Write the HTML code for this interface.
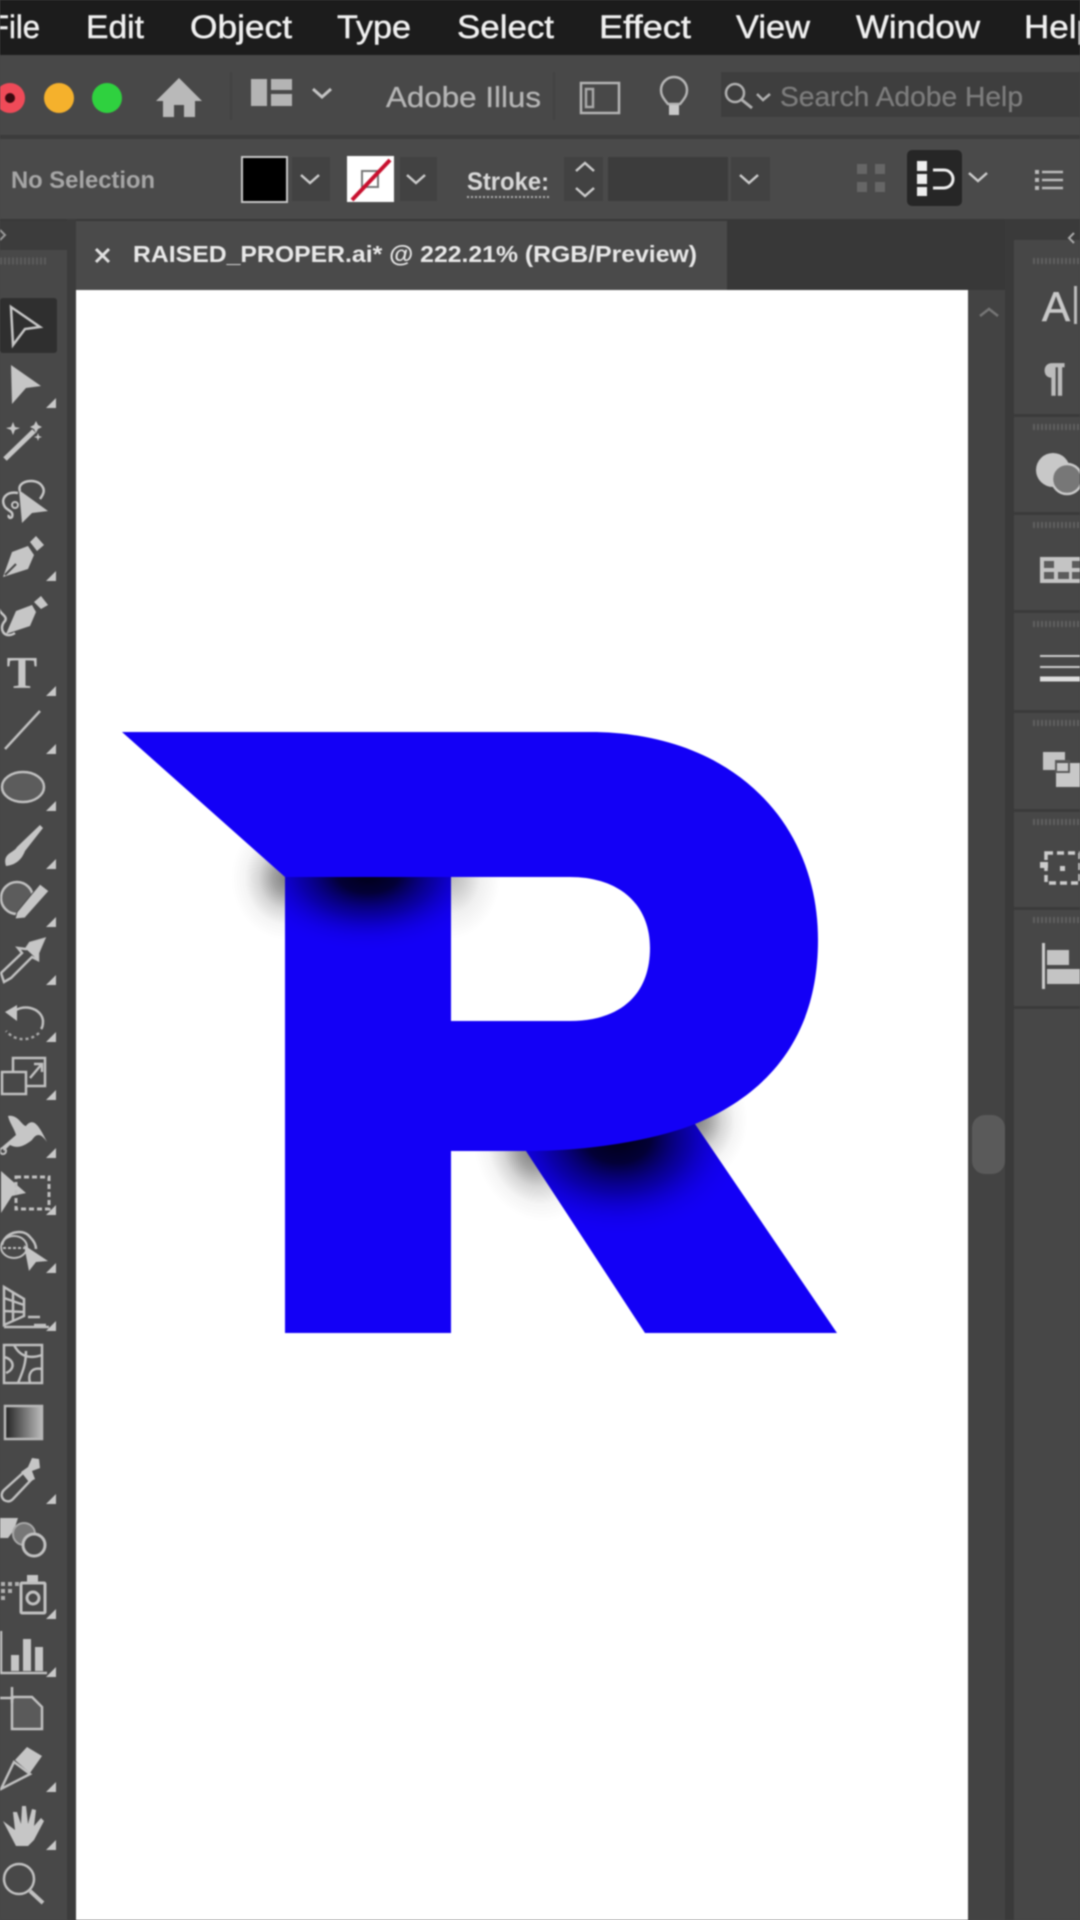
<!DOCTYPE html>
<html><head><meta charset="utf-8"><style>
html,body{margin:0;padding:0;background:#474747;width:1080px;height:1920px;overflow:hidden}
svg{display:block;filter:blur(.85px)}
text{font-family:"Liberation Sans",sans-serif}
</style></head><body>
<svg width="1080" height="1920" viewBox="0 0 1080 1920" xmlns="http://www.w3.org/2000/svg">
<defs>
<radialGradient id="sd"><stop offset="0" stop-color="#000" stop-opacity=".5"/><stop offset=".25" stop-color="#000" stop-opacity=".36"/><stop offset=".5" stop-color="#000" stop-opacity=".16"/><stop offset=".75" stop-color="#000" stop-opacity=".04"/><stop offset="1" stop-color="#000" stop-opacity="0"/></radialGradient>
<radialGradient id="sl"><stop offset="0" stop-color="#000" stop-opacity=".28"/><stop offset=".3" stop-color="#000" stop-opacity=".18"/><stop offset=".6" stop-color="#000" stop-opacity=".06"/><stop offset="1" stop-color="#000" stop-opacity="0"/></radialGradient>
<radialGradient id="in"><stop offset="0" stop-color="#000014"/><stop offset=".25" stop-color="#020030" stop-opacity=".97"/><stop offset=".55" stop-color="#06007a" stop-opacity=".62"/><stop offset=".8" stop-color="#0d00c0" stop-opacity=".22"/><stop offset="1" stop-color="#1300f6" stop-opacity="0"/></radialGradient>
<linearGradient id="gr"><stop offset="0" stop-color="#222"/><stop offset="1" stop-color="#bbb"/></linearGradient>
<clipPath id="stem"><rect x="285" y="877" width="166" height="200"/></clipPath>
<clipPath id="leg"><path d="M526 1151C590 1151 655 1140 695 1124L837 1333H645Z"/></clipPath>
<path id="tri" d="M0 8L10 -2V8Z" fill="#c8c8c8"/>
</defs>

<!-- base -->
<rect width="1080" height="1920" fill="#474747"/>
<rect width="1080" height="55" fill="#1c1c1c"/>
<rect y="55" width="1080" height="80" fill="#484848"/>
<rect y="135" width="1080" height="4" fill="#3b3b3b"/>
<rect y="139" width="1080" height="80" fill="#4a4a4a"/>
<rect y="219" width="1080" height="71" fill="#383838"/>

<!-- menu -->
<g font-size="32" fill="#f0f0f0" stroke="#f0f0f0" stroke-width=".45">
<text x="-10" y="38" textLength="50" lengthAdjust="spacingAndGlyphs">File</text>
<text x="86" y="38" textLength="58" lengthAdjust="spacingAndGlyphs">Edit</text>
<text x="190" y="38" textLength="102" lengthAdjust="spacingAndGlyphs">Object</text>
<text x="337" y="38" textLength="74" lengthAdjust="spacingAndGlyphs">Type</text>
<text x="457" y="38" textLength="97" lengthAdjust="spacingAndGlyphs">Select</text>
<text x="599" y="38" textLength="92" lengthAdjust="spacingAndGlyphs">Effect</text>
<text x="736" y="38" textLength="74" lengthAdjust="spacingAndGlyphs">View</text>
<text x="856" y="38" textLength="124" lengthAdjust="spacingAndGlyphs">Window</text>
<text x="1024" y="38" textLength="72" lengthAdjust="spacingAndGlyphs">Help</text>
</g>

<!-- row 1 -->
<circle cx="10" cy="98" r="15" fill="#ef4a58"/><circle cx="10" cy="98" r="5" fill="#3a0a10"/>
<circle cx="59" cy="98" r="15" fill="#f5b12c"/>
<circle cx="107" cy="98" r="15" fill="#2fd13f"/>
<path d="M179 78L202 101H195V117H184V105H174V117H163V101H156Z" fill="#b9b9b9"/>
<rect x="230" y="72" width="2" height="48" fill="#424242"/>
<path d="M251 79H267V106H251ZM271 79H292V90H271ZM271 94H292V106H271Z" fill="#b4b4b4"/>
<path d="M313 89L322 97L331 89" fill="none" stroke="#c4c4c4" stroke-width="3"/>
<text x="386" y="107" font-size="29" fill="#b5b5b5" stroke="#b5b5b5" stroke-width=".3" textLength="155" lengthAdjust="spacingAndGlyphs">Adobe Illus</text>
<rect x="553" y="72" width="2" height="48" fill="#424242"/>
<rect x="581" y="83" width="38" height="30" fill="none" stroke="#b4b4b4" stroke-width="2.5"/><rect x="586" y="89" width="7" height="18" fill="none" stroke="#a8a8a8" stroke-width="2.5"/>
<path d="M668 104C662 97 661 94 661 90A13 13 0 1 1 687 90C687 94 686 97 680 104Z" fill="none" stroke="#b4b4b4" stroke-width="2.5"/><rect x="669" y="105" width="10" height="10" fill="#c8c8c8"/>
<rect x="721" y="72" width="359" height="45" fill="#3e3e3e"/>
<circle cx="735" cy="93" r="9" fill="none" stroke="#b0b0b0" stroke-width="2.5"/><path d="M742 100L752 108" stroke="#b0b0b0" stroke-width="3"/>
<path d="M757 94L763 100L770 94" fill="none" stroke="#b0b0b0" stroke-width="2.5"/>
<text x="780" y="106" font-size="28" fill="#7c7c7c" stroke="#7c7c7c" stroke-width=".3" textLength="243" lengthAdjust="spacingAndGlyphs">Search Adobe Help</text>

<!-- row 2 -->
<text x="11" y="188" font-size="24" font-weight="bold" fill="#a6a6a6" textLength="144" lengthAdjust="spacingAndGlyphs">No Selection</text>
<rect x="242" y="157" width="45" height="45" fill="#000" stroke="#c8c8c8" stroke-width="2"/>
<rect x="292" y="157" width="38" height="44" fill="#424242"/>
<path d="M301 175L310 183L319 175" fill="none" stroke="#ccc" stroke-width="2.5"/>
<rect x="347" y="156" width="47" height="46" fill="#fff"/>
<rect x="362" y="171" width="16" height="16" fill="none" stroke="#777" stroke-width="2"/>
<path d="M352 200L390 160" stroke="#c8102e" stroke-width="4"/>
<rect x="400" y="157" width="37" height="44" fill="#424242"/>
<path d="M407 175L416 183L425 175" fill="none" stroke="#ccc" stroke-width="2.5"/>
<text x="467" y="190" font-size="25" font-weight="bold" fill="#d8d8d8" textLength="82" lengthAdjust="spacingAndGlyphs">Stroke:</text>
<path d="M467 197H549" stroke="#b0b0b0" stroke-width="2" stroke-dasharray="2 2"/>
<rect x="564" y="157" width="39" height="44" fill="#424242"/><rect x="608" y="157" width="120" height="44" fill="#3c3c3c"/><rect x="731" y="157" width="39" height="44" fill="#424242"/>
<path d="M576 171L585 163L594 171M576 188L585 196L594 188M740 175L749 183L758 175" fill="none" stroke="#ccc" stroke-width="2.5"/>
<path d="M857 164h10v10h-10zM875 164h10v10h-10zM857 182h10v10h-10zM875 182h10v10h-10z" fill="#666"/>
<rect x="907" y="150" width="55" height="56" rx="5" fill="#262626"/>
<path d="M917 161h10v10h-10zM917 174h10v10h-10zM917 187h10v9h-10z" fill="#eee"/>
<path d="M933 170H944A9 9 0 0 1 944 188H933" fill="none" stroke="#eee" stroke-width="3"/>
<path d="M969 173L978 181L987 173" fill="none" stroke="#ccc" stroke-width="2.5"/>
<path d="M1035 170h4v4h-4zM1035 178h4v4h-4zM1035 186h4v4h-4z" fill="#bbb"/><path d="M1042 172H1063M1042 180H1063M1042 188H1063" stroke="#bbb" stroke-width="2.5"/>

<!-- left panel, tab -->
<rect x="0" y="221" width="68" height="29" fill="#3c3c3c"/>
<rect x="0" y="250" width="67" height="1670" fill="#484848"/>
<rect x="67" y="219" width="9" height="1701" fill="#3c3c3c"/>
<path d="M0 261H46" stroke="#5c5c5c" stroke-width="7" stroke-dasharray="2 2"/>
<path d="M0 230l5 5-5 5" fill="none" stroke="#999" stroke-width="2"/>
<rect x="76" y="221" width="651" height="69" fill="#4a4a4a"/>
<path d="M96 249L109 262M109 249L96 262" stroke="#e0e0e0" stroke-width="3"/>
<text x="133" y="262" font-size="23.5" font-weight="bold" fill="#e8e8e8" textLength="564" lengthAdjust="spacingAndGlyphs">RAISED_PROPER.ai* @ 222.21% (RGB/Preview)</text>

<!-- canvas -->
<rect x="76" y="290" width="892" height="1630" fill="#fff"/>

<!-- right -->
<rect x="968" y="290" width="38" height="1630" fill="#434343"/>
<rect x="1005" y="219" width="9" height="1701" fill="#3a3a3a"/>
<rect x="1014" y="240" width="66" height="1680" fill="#474747"/>
<rect x="1014" y="219" width="66" height="21" fill="#3a3a3a"/>
<path d="M980 316L989 309L998 316" fill="none" stroke="#757575" stroke-width="2.5"/>
<rect x="972" y="1115" width="33" height="59" rx="13" fill="#5a5a5a"/>
<path d="M1074 233l-5 5 5 5" fill="none" stroke="#aaa" stroke-width="2"/>
<g fill="#3b3b3b"><rect x="1014" y="414" width="66" height="3"/><rect x="1014" y="512" width="66" height="3"/><rect x="1014" y="610" width="66" height="3"/><rect x="1014" y="710" width="66" height="3"/><rect x="1014" y="809" width="66" height="3"/><rect x="1014" y="907" width="66" height="3"/><rect x="1014" y="1006" width="66" height="3"/></g>
<g stroke="#606060" stroke-width="6" stroke-dasharray="2 2"><path d="M1033 261H1080M1033 427H1080M1033 525H1080M1033 624H1080M1033 723H1080M1033 822H1080M1033 920H1080"/></g>
<text x="1042" y="321" font-size="42" fill="#c8c8c8" stroke="#c8c8c8" stroke-width=".6">A</text><rect x="1074" y="286" width="3" height="38" fill="#bbb"/>
<text x="1044" y="390" font-size="38" font-weight="bold" fill="#bcbcbc" stroke="#bcbcbc" stroke-width="1.4">¶</text>
<circle cx="1053" cy="470" r="17" fill="#c8c8c8"/><circle cx="1067" cy="479" r="15" fill="#777" stroke="#c8c8c8" stroke-width="2.5"/>
<rect x="1040" y="557" width="40" height="26" fill="#c4c4c4"/><path d="M1044 561h10v7h-10zM1044 572h10v7h-10zM1072 561h8v7h-8zM1072 572h8v7h-8zM1058 572h11v7h-11z" fill="#5c5c5c"/>
<path d="M1040 656H1080M1040 667H1080" stroke="#ccc" stroke-width="2"/><path d="M1040 679H1080" stroke="#ddd" stroke-width="5"/>
<path d="M1043 752h22v8h-9v10h-13z" fill="#c4c4c4"/><rect x="1056" y="763" width="24" height="24" fill="#c8c8c8"/><rect x="1056" y="761" width="13" height="11" fill="none" stroke="#5a5a5a" stroke-width="2"/>
<rect x="1046" y="853" width="34" height="30" fill="none" stroke="#ccc" stroke-width="3.5" stroke-dasharray="7 4"/><rect x="1040" y="862" width="8" height="6" fill="#ccc"/><rect x="1060" y="866" width="5" height="5" fill="#ccc"/>
<rect x="1042" y="943" width="3" height="46" fill="#ccc"/><rect x="1047" y="950" width="22" height="15" fill="#c4c4c4"/><rect x="1047" y="969" width="33" height="15" fill="#c4c4c4"/>

<!-- R -->
<ellipse cx="287" cy="878" rx="56" ry="62" fill="url(#sd)"/>
<ellipse cx="451" cy="875" rx="50" ry="64" fill="url(#sl)"/>
<ellipse cx="696" cy="1120" rx="52" ry="62" fill="url(#sd)"/>
<ellipse cx="532" cy="1152" rx="56" ry="72" fill="url(#sd)" transform="rotate(-25 532 1152)"/>
<path fill="#1300f6" fill-rule="evenodd" d="M122 732H590C730 732 818 820 818 940C818 1040 765 1095 695 1124L837 1333H645L526 1151H451V1333H285V877ZM451 877H570C620 877 650 905 650 948C650 995 620 1021 570 1021H451Z"/>
<g clip-path="url(#stem)"><ellipse cx="368" cy="873" rx="125" ry="80" fill="url(#in)"/></g>
<g clip-path="url(#leg)"><ellipse cx="618" cy="1138" rx="130" ry="100" fill="url(#in)"/></g>

<!-- tools -->
<rect x="0" y="298" width="57" height="55" rx="3" fill="#2f2f2f"/>
<g fill="#c6c6c6" stroke="none">
<g transform="translate(22,326)"><path d="M-11-19L18 1L3 3L-9 19Z" fill="none" stroke="#c6c6c6" stroke-width="2.5"/></g>
<g transform="translate(22,384)"><path d="M-11-19L19 2L4 4L-10 20Z"/></g>
<g transform="translate(22,441)"><path d="M-17 18L12-10" stroke="#c6c6c6" stroke-width="5"/><path d="M-9-19l2 5 5 1-5 2-2 5-2-5-5-2 5-1zM14-20l2 4 4 2-4 2-2 4-2-4-4-2 4-2zM16-8l1 3 3 1-3 1-1 3-1-3-3-1 3-1z"/></g>
<g transform="translate(22,499)"><path d="M-3-9L26 12L10 14L0 24Z"/><path d="M-2-8C-6-18 14-22 20-13C24-8 20-3 18 0M-4-6C-16-8-22 0-17 8C-14 12-8 12-10 18C-12 20-14 18-13 16" fill="none" stroke="#c6c6c6" stroke-width="2.5"/><circle cx="-7" cy="6" r="3" fill="none" stroke="#c6c6c6" stroke-width="2"/></g>
<g transform="translate(22,557)"><path d="M-19 20L-10-5L6-11L12-2L6 12ZM8-15L14-21L22-12L15-6Z"/><path d="M-17 18L-6 7" stroke="#484848" stroke-width="2"/></g>
<g transform="translate(22,614)"><path d="M-8 20L2-3L18-9L22-2L16 12ZM20-12L27-18L34-9L27-5Z" transform="translate(-8,0)"/><path d="M-7 19C-18 26-24 14-17 7C-14 2-22 0-23-5" fill="none" stroke="#c6c6c6" stroke-width="2.5"/></g>
<text x="22" y="688" font-size="46" font-weight="bold" text-anchor="middle" fill="#c6c6c6" style="font-family:'Liberation Serif',serif">T</text>
<path d="M5 749L40 711" stroke="#c0c0c0" stroke-width="2.5"/>
<ellipse cx="23" cy="787" rx="21" ry="15" fill="#5c5c5c" stroke="#c0c0c0" stroke-width="2.5"/>
<g transform="translate(22,845)"><path d="M-16 21C-20 8-8 8-5 2L18-20L21-17L3 6C0 14-6 20-16 21Z"/></g>
<g transform="translate(22,903)"><circle cx="-5" cy="-5" r="16" fill="#5c5c5c" stroke="#c0c0c0" stroke-width="2.5"/><path d="M-7 16L-5 9L18-19L27-12L3 15Z" stroke="#484848" stroke-width="1"/></g>
<g transform="translate(22,961)"><path d="M-18 21L-21 12L0-8L-4-13L4-12L8-18L22-22L16-8L16-1L10-4L-11 17Z" fill="none" stroke="#c0c0c0" stroke-width="2.5"/><path d="M4-12L8-18L22-22L16-8L16-1Z"/></g>
<g transform="translate(22,1018)"><path d="M-11-4C0-16 20-10 21 3C21 8 20 10 19 11" fill="none" stroke="#c0c0c0" stroke-width="2.5"/><path d="M-17-6L-5-13L-5 3Z"/><path d="M17 15C8 23-6 24-16 13" fill="none" stroke="#a8a8a8" stroke-width="2.5" stroke-dasharray="3 3"/></g>
<g transform="translate(22,1076)" fill="none" stroke="#c0c0c0" stroke-width="2.5"><rect x="-9" y="-18" width="32" height="28"/><rect x="-20" y="-4" width="24" height="22" fill="#484848"/><path d="M8 2L19-11M12-12H20V-4"/></g>
<g transform="translate(22,1134)"><path d="M-14-18C-4-20 0-8 4-8C12-18 18-6 25 8C18-2 14 0 10 6C0 14-6 14-12 11L-18 17L-20 13L-6 1C-8-6-12-10-14-18Z"/><circle cx="-19" cy="17" r="3" fill="none" stroke="#c0c0c0" stroke-width="2"/></g>
<g transform="translate(22,1191)"><path d="M-21-20L4 2L-10 5L-21 22Z"/><rect x="-6" y="-14" width="33" height="32" fill="none" stroke="#c0c0c0" stroke-width="3" stroke-dasharray="5 3"/></g>
<g transform="translate(22,1249)"><ellipse cx="-8" cy="-2" rx="13" ry="11" fill="none" stroke="#c0c0c0" stroke-width="2"/><path d="M-20-4C-18-16 0-22 8-12C12-8 14-4 14 0" fill="none" stroke="#c0c0c0" stroke-width="2.5"/><path d="M-19-1H6" stroke="#c0c0c0" stroke-width="2" stroke-dasharray="3 2"/><path d="M2-4L26 12L14 13L7 22Z"/></g>
<g transform="translate(22,1307)" fill="none" stroke="#c0c0c0" stroke-width="2.5"><path d="M-18-20V18L2 9V-8ZM-18-9L2-2M-18 4L2 5M-9-15V14M12 18H24M-18 20H27M6 10H18"/></g>
<g transform="translate(22,1365)" fill="none" stroke="#c0c0c0" stroke-width="2.5"><rect x="-18" y="-20" width="38" height="38"/><path d="M-18-8C-8-6-6 4-16 8M-8-20C-2-8 8-6 20-10M4-14C4 0 0 8-4 18M20 4C8 2 6 10 8 18"/></g>
<rect x="5" y="1406" width="37" height="33" fill="url(#gr)" stroke="#b8b8b8" stroke-width="2.5"/>
<g transform="translate(22,1480)"><path d="M-18 20C-22 16-20 12-18 10L2-8L9 0L-9 19C-12 22-15 22-18 20Z" fill="none" stroke="#c0c0c0" stroke-width="2.5"/><path d="M-1-8L6-13L10-22L17-21L18-12L10-9L13-1L7 2Z"/></g>
<g transform="translate(22,1538)"><path d="M-22-20H-4L-8-8L-14 0H-22Z"/><circle cx="2" cy="-4" r="11" fill="#777" stroke="#a8a8a8" stroke-width="2"/><circle cx="12" cy="7" r="11" fill="#484848" stroke="#c0c0c0" stroke-width="3"/></g>
<g transform="translate(22,1595)"><path d="M-21-13h4v4h-4zM-14-13h4v4h-4zM-7-13h4v4h-4zM-21-6h4v4h-4zM-14-6h4v4h-4zM-21 1h4v4h-4z" fill="#b0b0b0"/><path d="M5-20H16V-13H5Z"/><rect x="-1" y="-12" width="24" height="30" rx="1" fill="none" stroke="#c0c0c0" stroke-width="3"/><circle cx="11" cy="3" r="6" fill="none" stroke="#c0c0c0" stroke-width="3"/></g>
<g transform="translate(22,1653)"><path d="M-21-22V20H25" fill="none" stroke="#c0c0c0" stroke-width="2.5"/><path d="M-11 2H-3V18H-11ZM1-14H9V18H1ZM13-6H21V18H13Z"/></g>
<g transform="translate(22,1711)" fill="none" stroke="#c0c0c0" stroke-width="2.5"><path d="M-10-14V18H20V-4L10-14Z" fill="#5a5a5a"/><path d="M-22-13H-8M-10-24V-8"/></g>
<g transform="translate(22,1768)"><path d="M-21 21L-8-6L8 6Z" fill="none" stroke="#c0c0c0" stroke-width="2.5"/><path d="M-7-8L5-21L20-12L8 5Z"/></g>
<g transform="translate(22,1826)"><path d="M-19-5L-7 4L-9-14L-5-14L-1-2L0-20H4L6-2L10-17L14-16L12 0L19-8L22-5L12 14L6 20H-6Z"/></g>
<g transform="translate(22,1883)" fill="none" stroke="#c0c0c0" stroke-width="2.5"><circle cx="-3" cy="-4" r="15"/><path d="M8 8L21 20" stroke-width="4"/></g>
</g>
<!-- flyout triangles -->
<use href="#tri" x="46" y="400"/><use href="#tri" x="46" y="573"/><use href="#tri" x="46" y="688"/><use href="#tri" x="46" y="746"/><use href="#tri" x="46" y="803"/><use href="#tri" x="46" y="861"/><use href="#tri" x="46" y="919"/><use href="#tri" x="46" y="977"/><use href="#tri" x="46" y="1034"/><use href="#tri" x="46" y="1092"/><use href="#tri" x="46" y="1150"/><use href="#tri" x="46" y="1207"/><use href="#tri" x="46" y="1265"/><use href="#tri" x="46" y="1323"/><use href="#tri" x="46" y="1496"/><use href="#tri" x="46" y="1611"/><use href="#tri" x="46" y="1669"/><use href="#tri" x="46" y="1784"/><use href="#tri" x="46" y="1842"/>
</svg>
</body></html>
